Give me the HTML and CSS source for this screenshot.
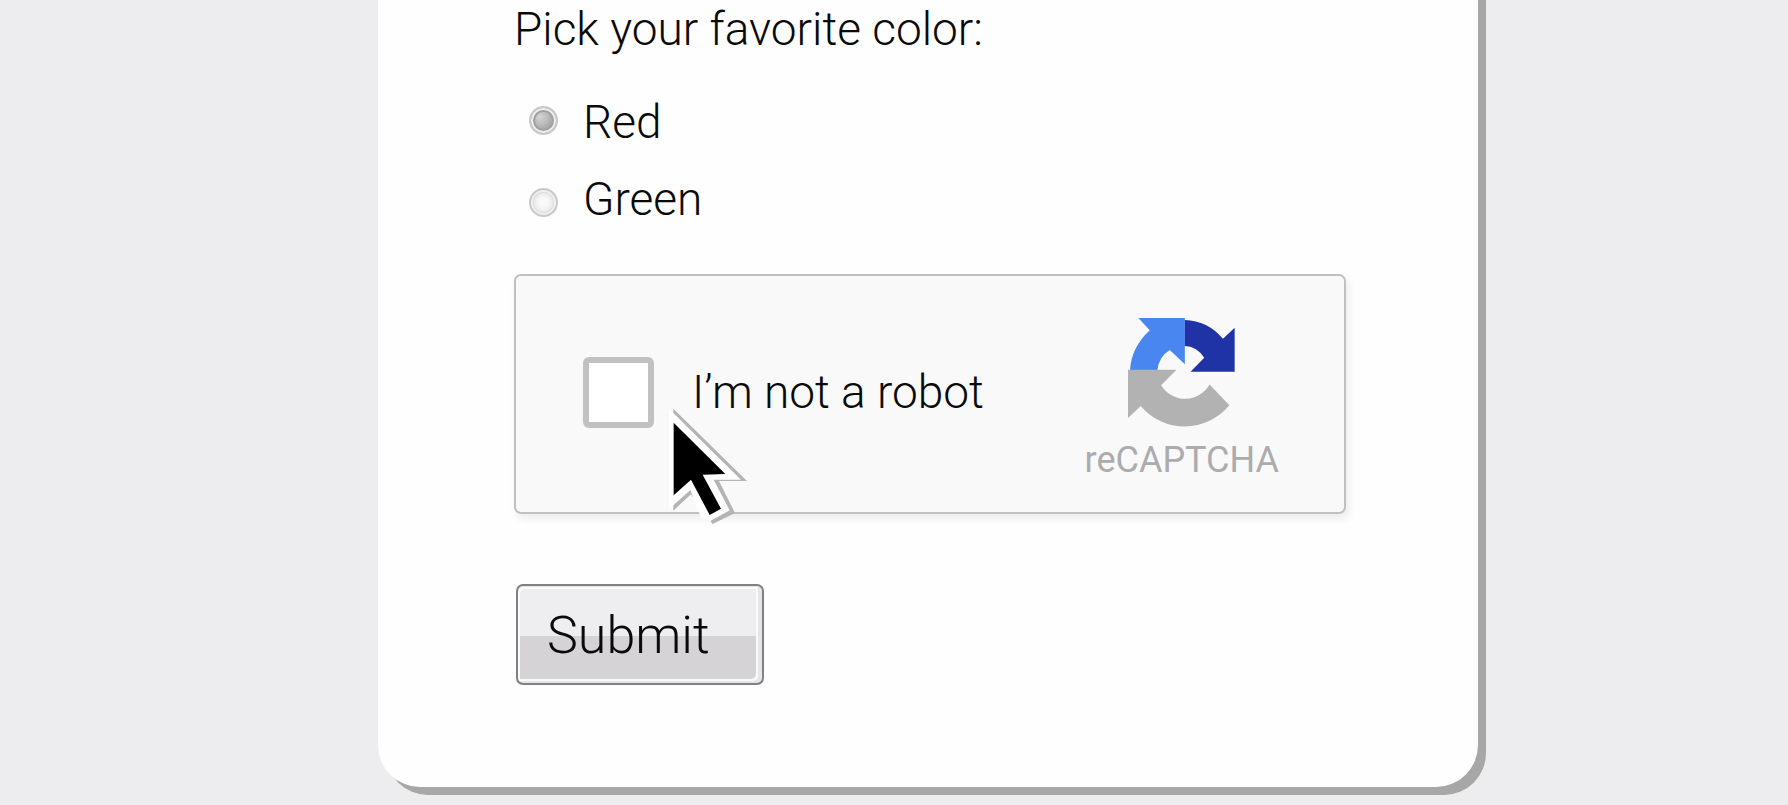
FILE: index.html
```html
<!DOCTYPE html>
<html lang="en">
<head>
<meta charset="utf-8">
<title>Favorite color</title>
<link rel="stylesheet" href="styles.css">
</head>
<body>
<form class="card">
  <fieldset class="question">
    <legend class="question-title">Pick your favorite color:</legend>
    <div class="options">
      <div class="radios">
        <input class="radio" type="radio" name="color" id="red" checked>
        <input class="radio" type="radio" name="color" id="green">
      </div>
      <div class="labels">
        <label for="red">Red</label>
        <label for="green">Green</label>
      </div>
    </div>
  </fieldset>

  <div class="captcha">
    <input class="captcha-box" type="checkbox" id="human">
    <label class="captcha-label" for="human">I’m not a robot</label>
    <div class="brand">
      <svg class="brand-logo" viewBox="264 174 320 326" aria-hidden="true">
        <path fill="#4a86f0" d="M295 174H434V312L389 270Q356 290 352 330H270Q274 262 329 211Z"/>
        <path fill="#1f33a6" d="M434 180Q502 182 548 236L583 203V335H451L492 293Q468 258 434 258Z"/>
        <path fill="#b2b2b2" d="M264 329H409L363 375A84 84 0 0 0 508 373L567 435A172 172 0 0 1 302 437L264 473Z"/>
      </svg>
      <span class="brand-name">reCAPTCHA</span>
    </div>
    <svg class="cursor" viewBox="50 50 240 360" aria-hidden="true">
      <path fill="#b4b4b6" d="M69 55L290 272H206L254 368L187 401L122 312L69 361Z"/>
      <path fill="#fff" d="M56 58L69 68L272 268H190L238 360L180 392L153 384L120 299L69 345L56 356Z"/>
      <path fill="#000" d="M70 97L225 251L157 253L212 355L178 374L122 268L70 315Z"/>
    </svg>
  </div>

  <div class="actions">
    <button class="submit" type="button">Submit</button>
  </div>
</form>
</body>
</html>
```
FILE: styles.css
```css
* {
  box-sizing: border-box;
}

body {
  margin: 0;
  background: #ededef;
  color: #0a0a0a;
  font-family: Roboto, "Liberation Sans", sans-serif;
  font-size: 46px;
  font-weight: 300;
  line-height: 54px;
}

.card {
  margin: 0 310px 18px 378px;
  padding: 2px 132px 102px 136px;
  background: #fefefe;
  border-radius: 0 0 42px 42px;
  box-shadow: 8px 8px 0 #a7a7a8, 8px 0 0 #a7a7a8;
}

.question {
  margin: 0;
  padding: 0;
  border: 0;
}

.question-title {
  padding: 0;
}

.options {
  display: flex;
  gap: 25px;
  padding: 28px 0 0 15px;
}

.radios {
  display: flex;
  flex-direction: column;
  gap: 53px;
  padding-top: 22px;
}

.radio {
  appearance: none;
  width: 29px;
  height: 29px;
  margin: 0;
  border: 2px solid #c9c9ca;
  border-radius: 50%;
  background: radial-gradient(circle, #f9f9f9 0 4px, #ececed 9px, #dcdcdd 10px, #f0f0f1 11px);
}

.radio:checked {
  background: radial-gradient(circle at 9px 9px, #d4d4d4, #a6a6a7 14px);
  box-shadow: inset 0 0 0 2px #eeeeef, inset 0 0 0 4px #a0a0a1;
}

.labels {
  display: flex;
  flex-direction: column;
  line-height: 77px;
}

.captcha {
  position: relative;
  display: flex;
  align-items: center;
  min-height: 240px;
  margin-top: 36px;
  padding: 0 65px 4px 67px;
  background: #f9f9fa;
  border: 2px solid #c0c0c2;
  border-radius: 7px;
  box-shadow: 3px 5px 8px #ededef;
}

.captcha-box {
  appearance: none;
  width: 71px;
  height: 71px;
  margin: 0 38px 0 0;
  background: #fff;
  border: 6px solid #c1c1c1;
  border-radius: 6px;
}

.brand {
  display: flex;
  flex-direction: column;
  align-items: center;
  gap: 13px;
  margin-left: auto;
  padding-top: 14px;
}

.brand-logo {
  width: 107px;
  height: 109px;
}

.brand-name {
  color: #acacae;
  font-size: 36px;
  font-weight: 400;
  line-height: 40px;
}

.cursor {
  position: absolute;
  left: 151px;
  top: 131px;
  width: 80px;
  height: 120px;
}

.actions {
  display: flex;
  padding: 70px 2px 0;
}

.submit {
  height: 101px;
  padding: 2px 52px 0 29px;
  border: 2px solid #818183;
  border-radius: 7px;
  background: linear-gradient(#eeeef0 0 52%, #d5d3d6 52%);
  box-shadow: inset -4px -2px 0 #e6e6e8, inset 0 1px 0 #e6e6e8, inset -6px -4px 0 #fafafa, inset 2px 3px 0 #fafafa;
  color: inherit;
  font: inherit;
  font-size: 52px;
}
```
